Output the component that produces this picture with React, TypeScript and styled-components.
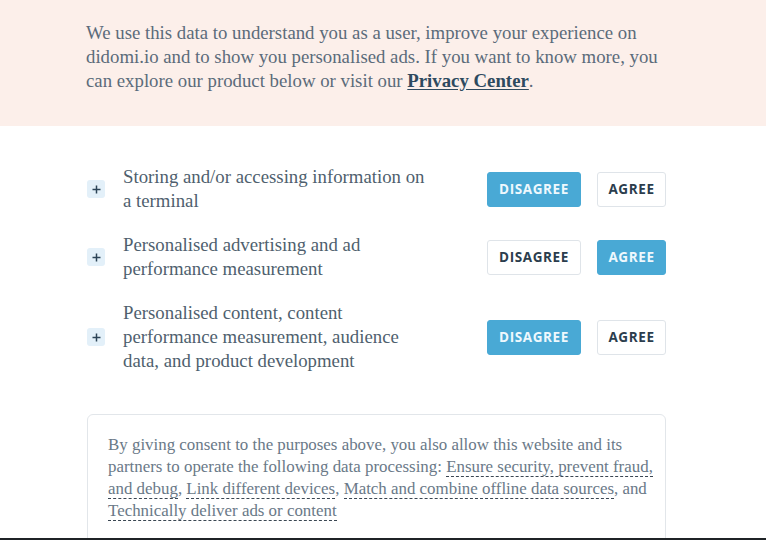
import React from "react";
import styled, { createGlobalStyle } from "styled-components";

type Choice = "agree" | "disagree";

type Purpose = {
  id: string;
  label: string;
  choice: Choice;
};

const purposes: Purpose[] = [
  { id: "storage", label: "Storing and/or accessing information on a terminal", choice: "disagree" },
  { id: "ads", label: "Personalised advertising and ad performance measurement", choice: "agree" },
  {
    id: "content",
    label: "Personalised content, content performance measurement, audience data, and product development",
    choice: "disagree",
  },
];

const specialFeatures = [
  "Ensure security, prevent fraud, and debug",
  "Link different devices",
  "Match and combine offline data sources",
  "Technically deliver ads or content",
];

const GlobalStyle = createGlobalStyle`
  html, body {
    margin: 0;
    padding: 0;
    background: #ffffff;
  }
  body {
    font-family: "Liberation Serif", "DejaVu Serif", serif;
    -webkit-font-smoothing: antialiased;
  }
`;

const Page = styled.div`
  width: 766px;
  min-height: 540px;
  background: #ffffff;
`;

const Banner = styled.header`
  background: #fcefea;
  padding: 21px 100px 33px 86px;
`;

const Intro = styled.p`
  margin: 0;
  font-size: 18.8px;
  line-height: 24px;
  color: #5b6b7a;
`;

const PrivacyLink = styled.a`
  color: #2e4a5f;
  font-weight: 700;
  text-decoration: underline;
  text-underline-offset: 2px;
`;

const Content = styled.main`
  padding: 39px 100px 0 87px;
`;

const PurposeList = styled.ul`
  list-style: none;
  margin: 0;
  padding: 0;
  display: flex;
  flex-direction: column;
  gap: 20px;
`;

const Row = styled.li`
  display: flex;
  align-items: center;
`;

const ExpandButton = styled.button`
  flex: 0 0 18px;
  width: 18px;
  height: 18px;
  padding: 0;
  border: 0;
  border-radius: 3px;
  background: #e3f0f9;
  display: flex;
  align-items: center;
  justify-content: center;
  cursor: pointer;
`;

const Label = styled.span`
  margin-left: 18px;
  width: 310px;
  font-size: 18.8px;
  line-height: 24px;
  color: #4f5f6e;
`;

const Actions = styled.div`
  margin-left: auto;
  display: flex;
  gap: 16px;
`;

const ChoiceButton = styled.button<{ $active: boolean }>`
  height: 35px;
  padding: 0 10px;
  border-radius: 3px;
  border: 1px solid ${(p) => (p.$active ? "#49a9d5" : "#dfe4e9")};
  background: ${(p) => (p.$active ? "#49a9d5" : "#ffffff")};
  color: ${(p) => (p.$active ? "#eef8fd" : "#2b3d4d")};
  font-family: "Open Sans", "Liberation Sans", sans-serif;
  font-weight: 700;
  font-size: 13.5px;
  letter-spacing: 0.6px;
  text-transform: uppercase;
  cursor: pointer;
`;

const DisagreeButton = styled(ChoiceButton)`
  width: 94px;
`;

const AgreeButton = styled(ChoiceButton)`
  width: 69px;
`;

const InfoBox = styled.section`
  margin-top: 41px;
  border: 1px solid #e2e6ea;
  border-radius: 6px;
  padding: 19px 12px 40px 20px;
`;

const InfoText = styled.p`
  margin: 0;
  font-size: 16.9px;
  line-height: 22px;
  color: #6a7988;
`;

const Feature = styled.span`
  border-bottom: 1px dashed #3a4652;
`;

const BottomEdge = styled.div`
  position: fixed;
  left: 0;
  right: 0;
  bottom: 0;
  height: 2px;
  background: #1f2326;
`;

const PlusIcon = () => (
  <svg width="9" height="9" viewBox="0 0 9 9" aria-hidden="true">
    <path d="M4.5 0.5v8M0.5 4.5h8" stroke="#2c4457" strokeWidth="1.5" />
  </svg>
);

const App: React.FC = () => {
  return (
    <Page>
      <GlobalStyle />
      <Banner>
        <Intro>
          We use this data to understand you as a user, improve your experience on didomi.io and to show you
          personalised ads. If you want to know more, you can explore our product below or visit our{" "}
          <PrivacyLink href="#">Privacy Center</PrivacyLink>.
        </Intro>
      </Banner>
      <Content>
        <PurposeList>
          {purposes.map((p) => (
            <Row key={p.id}>
              <ExpandButton aria-label="Expand">
                <PlusIcon />
              </ExpandButton>
              <Label>{p.label}</Label>
              <Actions>
                <DisagreeButton $active={p.choice === "disagree"}>Disagree</DisagreeButton>
                <AgreeButton $active={p.choice === "agree"}>Agree</AgreeButton>
              </Actions>
            </Row>
          ))}
        </PurposeList>
        <InfoBox>
          <InfoText>
            By giving consent to the purposes above, you also allow this website and its partners to operate the
            following data processing:{" "}
            {specialFeatures.map((f, i) => (
              <React.Fragment key={f}>
                <Feature>{f}</Feature>
                {i < specialFeatures.length - 2 ? ", " : i === specialFeatures.length - 2 ? ", and " : ""}
              </React.Fragment>
            ))}
          </InfoText>
        </InfoBox>
      </Content>
      <BottomEdge />
    </Page>
  );
};

export default App;
